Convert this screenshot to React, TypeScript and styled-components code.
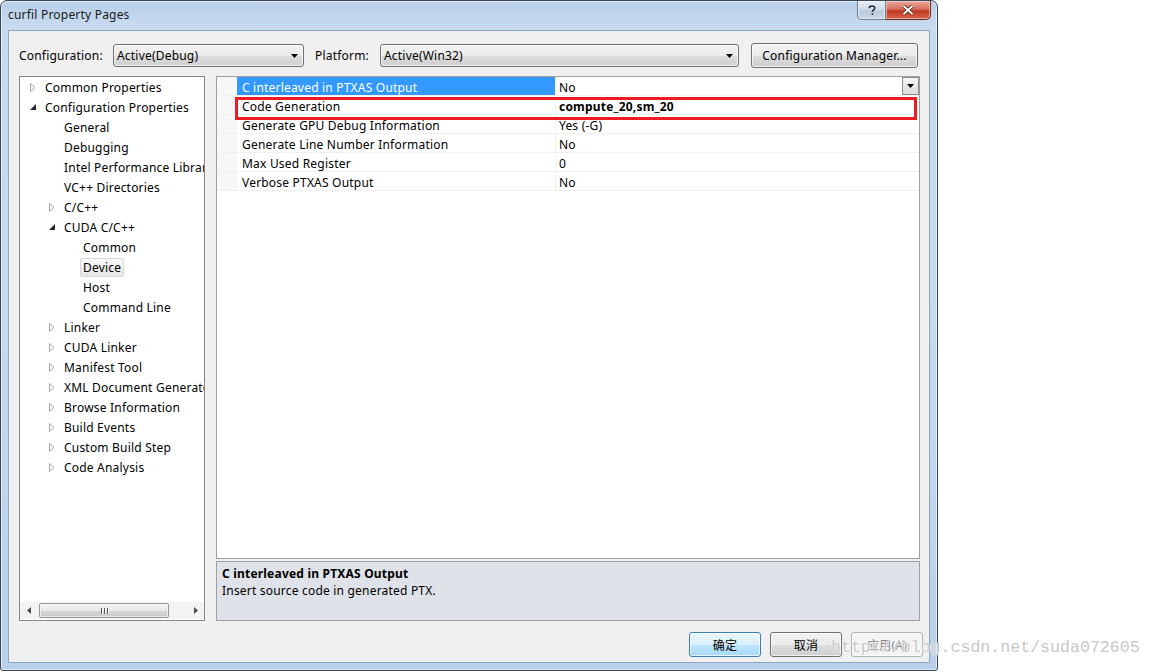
import React from "react";
import styled, { createGlobalStyle } from "styled-components";

const GlobalStyle = createGlobalStyle`
  html, body {
    margin: 0;
    padding: 0;
    background: #ffffff;
  }
  body {
    font-family: "Noto Sans", "Open Sans", sans-serif;
    font-size: 12px;
    letter-spacing: 0.2px;
    color: #000;
  }
`;

const Page = styled.div`
  position: relative;
  width: 1152px;
  height: 672px;
  overflow: hidden;
`;

const Window = styled.div`
  width: 938px;
  height: 671px;
  box-sizing: border-box;
  border: 1px solid #3b4756;
  border-radius: 7px 7px 3px 3px;
  background: linear-gradient(180deg, #b8cfe8 0%, #c8dbef 26px, #c3d8ee 60%, #b9d0ea 100%);
  box-shadow: inset 0 0 0 1px rgba(255, 255, 255, 0.55);
  padding: 0 7px 7px 7px;
  display: flex;
  flex-direction: column;
`;

const TitleBar = styled.div`
  height: 29px;
  display: flex;
  align-items: flex-start;
  justify-content: space-between;
`;

const TitleText = styled.div`
  padding-top: 5px;
  line-height: 18px;
  font-size: 12px;
  color: #1b1b1b;
`;

const Caption = styled.div`
  display: flex;
  margin-right: -1px;
`;

const CaptionButton = styled.div<{ $close?: boolean }>`
  height: 19px;
  width: ${(p) => (p.$close ? "45px" : "29px")};
  box-sizing: border-box;
  border: 1px solid ${(p) => (p.$close ? "#6b2b22" : "#6f7f92")};
  border-top: none;
  border-left: ${(p) => (p.$close ? "none" : "1px solid #6f7f92")};
  border-radius: ${(p) => (p.$close ? "0 0 5px 0" : "0 0 0 5px")};
  background: ${(p) =>
    p.$close
      ? "linear-gradient(180deg, #e9a99d 0%, #d86f5b 45%, #c0391f 55%, #d9664e 100%)"
      : "linear-gradient(180deg, #e6eef7 0%, #cfdcea 45%, #bccbdc 55%, #cbd9e8 100%)"};
  box-shadow: inset 0 0 0 1px rgba(255, 255, 255, 0.45);
  display: flex;
  align-items: center;
  justify-content: center;
`;

const Client = styled.div`
  flex: 1;
  background: #f0f0f0;
  border: 1px solid #8ea6c0;
  display: flex;
  flex-direction: column;
`;

const ConfigRow = styled.div`
  margin: 12px 0 0 10px;
  height: 25px;
  display: flex;
  align-items: center;
`;

const Label = styled.span<{ $w: number }>`
  width: ${(p) => p.$w}px;
  flex: none;
`;

const Combo = styled.div<{ $w: number }>`
  width: ${(p) => p.$w}px;
  height: 23px;
  box-sizing: border-box;
  border: 1px solid #707070;
  border-radius: 3px;
  background: linear-gradient(180deg, #f2f2f2 0%, #ebebeb 50%, #dddddd 51%, #cfcfcf 100%);
  box-shadow: inset 0 0 0 1px rgba(255, 255, 255, 0.7);
  display: flex;
  align-items: center;
  justify-content: space-between;
  padding: 0 5px 0 3px;
`;

const WinButton = styled.div<{ $w: number; $kind?: "default" | "disabled" }>`
  width: ${(p) => p.$w}px;
  height: 25px;
  box-sizing: border-box;
  border: 1px solid
    ${(p) => (p.$kind === "default" ? "#3c7fb1" : p.$kind === "disabled" ? "#adb2b5" : "#707070")};
  border-radius: 3px;
  background: ${(p) =>
    p.$kind === "default"
      ? "linear-gradient(180deg, #eaf6fd 0%, #d9f0fc 50%, #bee6fd 51%, #a7d9f5 100%)"
      : p.$kind === "disabled"
      ? "#f4f4f4"
      : "linear-gradient(180deg, #f2f2f2 0%, #ebebeb 50%, #dddddd 51%, #cfcfcf 100%)"};
  box-shadow: inset 0 0 0 1px rgba(255, 255, 255, 0.7);
  color: ${(p) => (p.$kind === "disabled" ? "#838383" : "#000")};
  display: flex;
  align-items: center;
  justify-content: center;
  font-family: "Noto Sans", "Noto Sans CJK SC", sans-serif;
`;

const Main = styled.div`
  margin: 8px 0 0 10px;
  height: 545px;
  display: flex;
  gap: 11px;
`;

const TreePanel = styled.div`
  width: 186px;
  box-sizing: border-box;
  border: 1px solid #828790;
  background: #fff;
  display: flex;
  flex-direction: column;
`;

const TreeBody = styled.div`
  flex: 1;
  overflow: hidden;
  white-space: nowrap;
`;

const TreeRow = styled.div<{ $level: number }>`
  height: 20px;
  display: flex;
  align-items: center;
  padding-left: ${(p) => 6 + p.$level * 19}px;
`;

const Expander = styled.span`
  width: 19px;
  flex: none;
  display: flex;
  align-items: center;
  padding-left: 4px;
  box-sizing: border-box;
`;

const TreeLabel = styled.span<{ $selected?: boolean }>`
  margin-left: -3px;
  padding: 0 2px 0 2px;
  height: 19px;
  line-height: 18px;
  box-sizing: border-box;
  border: 1px solid ${(p) => (p.$selected ? "#d9d9d9" : "transparent")};
  border-radius: 2px;
  background: ${(p) => (p.$selected ? "linear-gradient(180deg, #f8f8f8, #e5e5e5)" : "transparent")};
`;

const HScroll = styled.div`
  height: 17px;
  margin-bottom: 1px;
  background: #f3f3f3;
  display: flex;
  align-items: center;
`;

const ScrollArrow = styled.div`
  width: 17px;
  height: 17px;
  display: flex;
  align-items: center;
  justify-content: center;
`;

const ScrollTrack = styled.div`
  flex: 1;
  height: 17px;
  display: flex;
  align-items: center;
`;

const Thumb = styled.div`
  margin-left: 2px;
  width: 130px;
  height: 15px;
  box-sizing: border-box;
  border: 1px solid #979797;
  border-radius: 2px;
  background: linear-gradient(180deg, #f3f3f3 0%, #e8e8e8 50%, #d6d6d6 51%, #cacaca 100%);
  box-shadow: inset 0 0 0 1px rgba(255, 255, 255, 0.6);
  display: flex;
  align-items: center;
  justify-content: center;
  gap: 2px;
`;

const Grip = styled.span`
  width: 1px;
  height: 6px;
  background: #555;
  box-shadow: 1px 0 0 #fff;
`;

const RightPanel = styled.div`
  width: 704px;
  display: flex;
  flex-direction: column;
  gap: 2px;
`;

const GridBox = styled.div`
  position: relative;
  flex: 1;
  box-sizing: border-box;
  border: 1px solid #a0a0a0;
  background: #fff;
`;

const PropRow = styled.div`
  height: 19px;
  display: flex;
  box-sizing: border-box;
  border-bottom: 1px solid #f0f0f0;
`;

const Gutter = styled.div`
  width: 20px;
  flex: none;
  background: #f7f7f7;
`;

const NameCell = styled.div<{ $active?: boolean }>`
  width: 319px;
  flex: none;
  box-sizing: border-box;
  padding: 3px 0 0 5px;
  line-height: 15px;
  border-right: 1px solid #f0f0f0;
  background: ${(p) => (p.$active ? "#3399ff" : "transparent")};
  color: ${(p) => (p.$active ? "#fff" : "#000")};
`;

const ValueCell = styled.div<{ $bold?: boolean }>`
  flex: 1;
  padding: 3px 0 0 3px;
  line-height: 15px;
  font-weight: ${(p) => (p.$bold ? 700 : 400)};
  display: flex;
  justify-content: space-between;
  align-items: flex-start;
`;

const DropButton = styled.div`
  width: 17px;
  height: 18px;
  margin-top: -3px;
  box-sizing: border-box;
  border: 1px solid #8c8c8c;
  background: linear-gradient(180deg, #f5f5f5, #dcdcdc);
  display: flex;
  align-items: center;
  justify-content: center;
`;

const Highlight = styled.div`
  position: absolute;
  left: 18px;
  top: 20px;
  width: 682px;
  height: 23px;
  box-sizing: border-box;
  border: 3px solid #ed1c24;
  pointer-events: none;
`;

const DescBox = styled.div`
  height: 60px;
  box-sizing: border-box;
  border: 1px solid #a0a0a0;
  background: #dfe2e8;
  padding: 3px 5px;
  line-height: 17px;
`;

const DescTitle = styled.div`
  font-weight: 700;
`;

const ButtonRow = styled.div`
  margin-top: 11px;
  padding-right: 6px;
  display: flex;
  justify-content: flex-end;
  gap: 9px;
`;

const Watermark = styled.div`
  position: absolute;
  left: 831px;
  top: 638px;
  font-family: "Liberation Mono", monospace;
  font-size: 16.6px;
  letter-spacing: 0;
  color: #c8c8c8;
  text-shadow: 0 0 1px #fff, 0 0 2px #fff;
  white-space: nowrap;
  pointer-events: none;
`;

const ComboArrow = () => (
  <svg width="7" height="4" viewBox="0 0 7 4">
    <path d="M0 0H7L3.5 4Z" fill="#000" />
  </svg>
);

const Collapsed = () => (
  <svg width="6" height="9" viewBox="0 0 6 9">
    <path d="M0.5 0.5L5 4.5L0.5 8.5Z" fill="#fff" stroke="#a6a6a6" />
  </svg>
);

const Expanded = () => (
  <svg width="6" height="6" viewBox="0 0 6 6">
    <path d="M6 0V6H0Z" fill="#262626" />
  </svg>
);

type Node = { label: string; level: number; state?: "open" | "closed"; selected?: boolean };

const tree: Node[] = [
  { label: "Common Properties", level: 0, state: "closed" },
  { label: "Configuration Properties", level: 0, state: "open" },
  { label: "General", level: 1 },
  { label: "Debugging", level: 1 },
  { label: "Intel Performance Libraries", level: 1 },
  { label: "VC++ Directories", level: 1 },
  { label: "C/C++", level: 1, state: "closed" },
  { label: "CUDA C/C++", level: 1, state: "open" },
  { label: "Common", level: 2 },
  { label: "Device", level: 2, selected: true },
  { label: "Host", level: 2 },
  { label: "Command Line", level: 2 },
  { label: "Linker", level: 1, state: "closed" },
  { label: "CUDA Linker", level: 1, state: "closed" },
  { label: "Manifest Tool", level: 1, state: "closed" },
  { label: "XML Document Generator", level: 1, state: "closed" },
  { label: "Browse Information", level: 1, state: "closed" },
  { label: "Build Events", level: 1, state: "closed" },
  { label: "Custom Build Step", level: 1, state: "closed" },
  { label: "Code Analysis", level: 1, state: "closed" },
];

const props = [
  { name: "C interleaved in PTXAS Output", value: "No", active: true },
  { name: "Code Generation", value: "compute_20,sm_20", bold: true },
  { name: "Generate GPU Debug Information", value: "Yes (-G)" },
  { name: "Generate Line Number Information", value: "No" },
  { name: "Max Used Register", value: "0" },
  { name: "Verbose PTXAS Output", value: "No" },
];

export default function App() {
  return (
    <Page>
      <GlobalStyle />
      <Window>
        <TitleBar>
          <TitleText>curfil Property Pages</TitleText>
          <Caption>
            <CaptionButton>
              <svg width="8" height="11" viewBox="0 0 8 11">
                <path
                  d="M1.2 3.2C1.2 1.6 2.4 0.9 4 0.9C5.7 0.9 6.8 1.8 6.8 3.1C6.8 4.8 4.4 5 4.4 6.8"
                  fill="none"
                  stroke="#1e2a38"
                  strokeWidth="1.5"
                />
                <rect x="3.6" y="8.3" width="1.6" height="1.7" fill="#1e2a38" />
              </svg>
            </CaptionButton>
            <CaptionButton $close>
              <svg width="12" height="10" viewBox="0 0 12 10">
                <path d="M1.5 1L10.5 9M10.5 1L1.5 9" stroke="#4a1a12" strokeWidth="3.6" />
                <path d="M1.5 1L10.5 9M10.5 1L1.5 9" stroke="#fff" strokeWidth="2" />
              </svg>
            </CaptionButton>
          </Caption>
        </TitleBar>
        <Client>
          <ConfigRow>
            <Label $w={94}>Configuration:</Label>
            <Combo $w={191}>
              <span>Active(Debug)</span>
              <ComboArrow />
            </Combo>
            <Label $w={65} style={{ marginLeft: 11 }}>
              Platform:
            </Label>
            <Combo $w={359}>
              <span>Active(Win32)</span>
              <ComboArrow />
            </Combo>
            <WinButton $w={167} style={{ marginLeft: 12 }}>
              Configuration Manager...
            </WinButton>
          </ConfigRow>
          <Main>
            <TreePanel>
              <TreeBody>
                {tree.map((n) => (
                  <TreeRow key={n.label} $level={n.level}>
                    <Expander>
                      {n.state === "closed" && <Collapsed />}
                      {n.state === "open" && <Expanded />}
                    </Expander>
                    <TreeLabel $selected={n.selected}>{n.label}</TreeLabel>
                  </TreeRow>
                ))}
              </TreeBody>
              <HScroll>
                <ScrollArrow>
                  <svg width="4" height="7" viewBox="0 0 4 7">
                    <path d="M4 0V7L0 3.5Z" fill="#4d4d4d" />
                  </svg>
                </ScrollArrow>
                <ScrollTrack>
                  <Thumb>
                    <Grip />
                    <Grip />
                    <Grip />
                  </Thumb>
                </ScrollTrack>
                <ScrollArrow>
                  <svg width="4" height="7" viewBox="0 0 4 7">
                    <path d="M0 0V7L4 3.5Z" fill="#4d4d4d" />
                  </svg>
                </ScrollArrow>
              </HScroll>
            </TreePanel>
            <RightPanel>
              <GridBox>
                {props.map((p) => (
                  <PropRow key={p.name}>
                    <Gutter />
                    <NameCell $active={p.active}>{p.name}</NameCell>
                    <ValueCell $bold={p.bold}>
                      <span>{p.value}</span>
                      {p.active && (
                        <DropButton>
                          <ComboArrow />
                        </DropButton>
                      )}
                    </ValueCell>
                  </PropRow>
                ))}
                <Highlight />
              </GridBox>
              <DescBox>
                <DescTitle>C interleaved in PTXAS Output</DescTitle>
                <div>Insert source code in generated PTX.</div>
              </DescBox>
            </RightPanel>
          </Main>
          <ButtonRow>
            <WinButton $w={72} $kind="default">
              确定
            </WinButton>
            <WinButton $w={72}>取消</WinButton>
            <WinButton $w={72} $kind="disabled">
              应用(A)
            </WinButton>
          </ButtonRow>
        </Client>
      </Window>
      <Watermark>http://blog.csdn.net/suda072605</Watermark>
    </Page>
  );
}
